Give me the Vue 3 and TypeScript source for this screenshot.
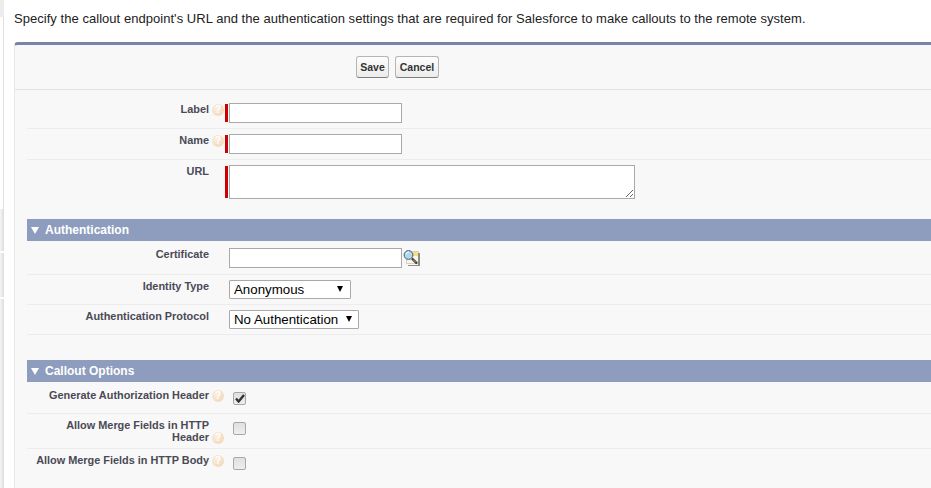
<script setup lang="ts">
const main = [
  { label: 'Label' },
  { label: 'Name' },
];
const identity = ['Anonymous'];
</script>

<template>
  <div class="page">
    <aside class="rail">
      <div class="rail-top"></div>
      <div class="rail-blank"></div>
      <div class="rail-seg s2"></div>
      <div class="rail-seg s3"></div>
      <div class="rail-seg s4"></div>
    </aside>
    <main class="content">
      <p class="intro">Specify the callout endpoint's URL and the authentication settings that are required for Salesforce to make callouts to the remote system.</p>
      <section class="block">
        <div class="buttons">
          <button class="btn save" type="button">Save</button>
          <button class="btn cancel" type="button">Cancel</button>
        </div>
        <div class="body">
          <div v-for="r in main" :key="r.label" class="row text-row">
            <div class="lab">{{ r.label }}<span class="help">?</span></div>
            <div class="val"><i class="req"></i><input class="txt" type="text" /></div>
          </div>
          <div class="row url-row">
            <div class="lab">URL</div>
            <div class="val"><i class="req tall"></i><textarea class="area"></textarea></div>
          </div>

          <h3 class="sec"><span class="tri"></span>Authentication</h3>
          <div class="row cert-row">
            <div class="lab">Certificate</div>
            <div class="val ind">
              <input class="txt" type="text" />
              <svg class="lookup" width="17" height="16" viewBox="0 0 17 16">
                <rect x="3.5" y="1.5" width="12" height="12" fill="#f8f5e8" stroke="#d2d2c6" />
                <rect x="10" y="2" width="6" height="4" fill="#f7dc8e" />
                <rect x="15" y="3" width="2" height="13" fill="#8d8d85" />
                <rect x="5" y="15" width="12" height="1" fill="#8d8d85" />
                <circle cx="5.5" cy="5" r="4.4" fill="#b4d5ec" stroke="#3c5f7a" stroke-width="1" />
                <path d="M3 4.5a3 3 0 0 1 3-2.5" stroke="#fff" fill="none" />
                <path d="M9 8.5l5 5" stroke="#2c2c2c" stroke-width="2.4" />
                <path d="M10 9.5l3 3" stroke="#e2b77a" stroke-width="1" />
              </svg>
            </div>
          </div>
          <div class="row sel-row">
            <div class="lab">Identity Type</div>
            <div class="val ind">
              <div class="sel w1"><span>{{ identity[0] }}</span><b class="arrow"></b></div>
            </div>
          </div>
          <div class="row sel-row last">
            <div class="lab">Authentication Protocol</div>
            <div class="val ind">
              <div class="sel w2"><span>No Authentication</span><b class="arrow"></b></div>
            </div>
          </div>

          <h3 class="sec"><span class="tri"></span>Callout Options</h3>
          <div class="row chk-row one">
            <div class="lab">Generate Authorization Header<span class="help">?</span></div>
            <div class="val ind">
              <span class="chk">
                <svg width="10" height="9" viewBox="0 0 10 9"><path d="M1 4.5l2.6 3L9 1" fill="none" stroke="#333" stroke-width="2.4" /></svg>
              </span>
            </div>
          </div>
          <div class="row chk-row two">
            <div class="lab">Allow Merge Fields in HTTP <span class="nb">Header<span class="help">?</span></span></div>
            <div class="val ind"><span class="chk"></span></div>
          </div>
          <div class="row chk-row end">
            <div class="lab">Allow Merge Fields in HTTP Body<span class="help">?</span></div>
            <div class="val ind"><span class="chk"></span></div>
          </div>
        </div>
      </section>
    </main>
  </div>
</template>

<style>
html, body { margin: 0; background: #fff; overflow: hidden; }
</style>

<style scoped>
.page {
  width: 931px;
  height: 488px;
  display: flex;
  overflow: hidden;
  font-family: "Liberation Sans", Arial, sans-serif;
  background: #fff;
}
.rail {
  width: 4px;
  flex: none;
  display: flex;
  flex-direction: column;
  background: #fff;
}
.rail-top { height: 17px; background: #ececec; }
.rail-blank { height: 192px; border-right: 1px solid #e0e0e0; }
.rail-seg {
  background: linear-gradient(90deg, #f6f6f6, #dcdcdc);
  border-bottom: 2px solid #fff;
}
.s2 { height: 42px; }
.s3 { height: 44px; }
.s4 { flex: 1; border-bottom: 0; }
.content { flex: 1; min-width: 0; padding-left: 10px; }
.intro {
  margin: 0;
  height: 42px;
  padding-top: 11px;
  box-sizing: border-box;
  font-size: 13px;
  line-height: 15px;
  letter-spacing: 0.04px;
  color: #222;
  white-space: nowrap;
}
.block {
  height: 446px;
  margin-right: -10px;
  background: #f8f8f8;
  border-top: 3px solid #7a84a4;
  border-left: 1px solid #e8e8e8;
  border-radius: 4px 0 0 0;
  box-sizing: border-box;
}
.buttons {
  height: 45px;
  box-sizing: border-box;
  padding: 11px 0 0 341px;
  display: flex;
  gap: 6px;
  align-items: flex-start;
  border-bottom: 1px solid #e2e2e2;
}
.btn {
  height: 22px;
  padding: 0;
  font: bold 10.5px/20px "Liberation Sans", Arial, sans-serif;
  color: #333;
  background: linear-gradient(#fdfdfd, #ececec);
  border: 1px solid #b5b5b5;
  border-bottom-color: #7f7f7f;
  border-radius: 3px;
}
.save { width: 33px; }
.cancel { width: 44px; }
.body { padding: 8px 0 0 12px; }
.row {
  display: flex;
  padding-top: 5px;
  border-bottom: 1px solid #ececec;
  box-sizing: border-box;
}
.lab {
  width: 198px;
  flex: none;
  box-sizing: border-box;
  padding-right: 16px;
  text-align: right;
  font-size: 10.9px;
  font-weight: bold;
  line-height: 12px;
  color: #4a4a56;
}
.nb { white-space: nowrap; }
.help {
  display: inline-block;
  width: 12px;
  height: 12px;
  margin: 1px -15px 0 3px;
  border-radius: 50%;
  background: radial-gradient(circle at 35% 35%, #fbeedd, #efd4b4);
  color: #fff;
  font-size: 10px;
  line-height: 12px;
  text-align: center;
  vertical-align: top;
}
.val { display: flex; align-items: flex-start; }
.req {
  width: 3px;
  height: 18px;
  margin: 1px 1px 0 0;
  background: #c00;
  flex: none;
}
.req.tall { height: 32px; }
.txt {
  width: 173px;
  height: 20px;
  padding: 0;
  box-sizing: border-box;
  background: #fff;
  border: 1px solid #a9a9a9;
  outline: 0;
}
.area {
  width: 406px;
  height: 34px;
  padding: 0;
  box-sizing: border-box;
  background: #fff;
  border: 1px solid #a9a9a9;
  outline: 0;
  display: block;
}
.text-row { height: 31px; }
.url-row { height: 59px; border-bottom: 0; }
.ind { padding-left: 4px; }
.sec {
  margin: 0;
  height: 22px;
  display: flex;
  align-items: center;
  background: #8e9dbe;
  color: #fff;
  font-size: 12px;
  font-weight: bold;
}
.tri {
  width: 0;
  height: 0;
  margin: 0 6px 0 4px;
  border-left: 4px solid transparent;
  border-right: 4px solid transparent;
  border-top: 7px solid #fff;
}
.cert-row { height: 34px; padding-top: 7px; }
.lookup { margin-left: 1px; margin-top: 2px; }
.sel-row { height: 30px; }
.sel {
  height: 19px;
  box-sizing: border-box;
  background: #fff;
  border: 1px solid #a9a9a9;
  border-radius: 1px;
  display: flex;
  align-items: center;
  justify-content: space-between;
  padding: 0 7px 0 4px;
  font-size: 13.3px;
  color: #000;
}
.w1 { width: 122px; }
.w2 { width: 130px; padding-right: 6px; }
.arrow {
  width: 0;
  height: 0;
  margin-top: -2px;
  border-left: 3px solid transparent;
  border-right: 3px solid transparent;
  border-top: 6px solid #000;
}
.last { margin-bottom: 25px; }
.chk-row { height: 35px; }
.chk-row.one { height: 32px; padding-top: 7px; }
.chk-row.end { border-bottom: 0; }
.chk {
  width: 11px;
  height: 11px;
  margin: 3px 0 0 4px;
  display: flex;
  align-items: center;
  justify-content: center;
  background: linear-gradient(#e0e0e0, #eeeeee);
  border: 1px solid #a8a8a8;
  border-radius: 2px;
}
</style>
